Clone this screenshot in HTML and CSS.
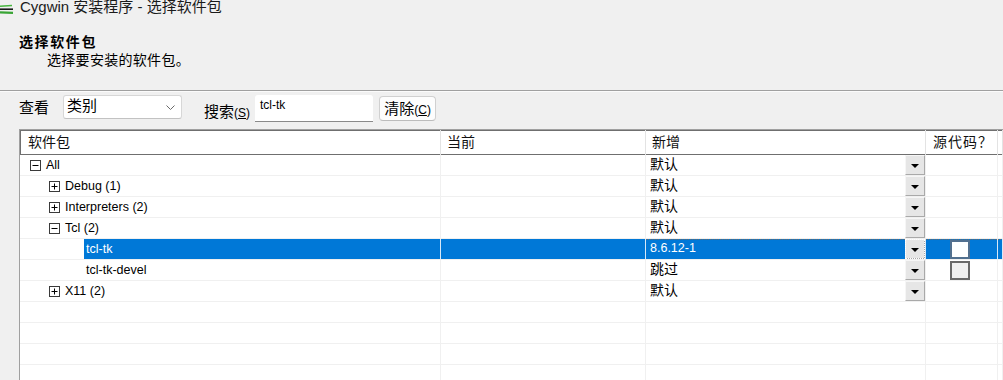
FILE: index.html
```html
<!DOCTYPE html>
<html lang="zh-CN">
<head>
<meta charset="utf-8">
<title>Cygwin 安装程序 - 选择软件包</title>
<link rel="stylesheet" href="styles.css">
</head>
<body>
<div class="titlebar">
  <svg class="logo" width="14" height="12" viewBox="0 0 14 12">
    <path d="M0 2.2 L12 1.5" stroke="#47b53f" stroke-width="1.6" fill="none"/>
    <path d="M0 5.2 L13 5.2" stroke="#1a1a1a" stroke-width="1.6" fill="none"/>
    <path d="M0 8.4 L13 8.8" stroke="#39a535" stroke-width="2.2" fill="none"/>
  </svg>
  <span class="title">Cygwin 安装程序 - 选择软件包</span>
</div>

<div class="pagehead">
  <div class="h1">选择软件包</div>
  <div class="sub">选择要安装的软件包。</div>
</div>
<div class="sep"></div>

<div class="toolbar">
  <span class="lbl">查看</span>
  <div class="combo">
    <span class="combo-text">类别</span>
    <svg class="chev" width="9" height="5" viewBox="0 0 9 5"><path d="M0.5 0.5 L4.5 4.5 L8.5 0.5" stroke="#6a6a6a" fill="none" stroke-width="1"/></svg>
  </div>
  <span class="lbl lbl-search">搜索<small>(<u>S</u>)</small></span>
  <div class="input">tcl-tk</div>
  <div class="btn">清除<small>(<u>C</u>)</small></div>
</div>

<div class="grid">
  <div class="row head">
    <div class="cell c1">软件包</div>
    <div class="cell c2">当前</div>
    <div class="cell c3">新增</div>
    <div class="cell c4">源代码？</div>
    <div class="cell c5"></div>
  </div>

  <div class="row">
    <div class="cell c1 l0"><svg class="exp" width="11" height="11" viewBox="0 0 11 11"><rect x="0.5" y="0.5" width="10" height="10" fill="#fff" stroke="#3a3a3a"/><path d="M2.5 5.5h6" stroke="#000"/></svg><span class="name">All</span></div>
    <div class="cell c2"></div>
    <div class="cell c3"><span class="val">默认</span><span class="dd"><i></i></span></div>
    <div class="cell c4"></div>
    <div class="cell c5"></div>
  </div>

  <div class="row">
    <div class="cell c1 l1"><svg class="exp" width="11" height="11" viewBox="0 0 11 11"><rect x="0.5" y="0.5" width="10" height="10" fill="#fff" stroke="#3a3a3a"/><path d="M2.5 5.5h6M5.5 2.5v6" stroke="#000"/></svg><span class="name">Debug (1)</span></div>
    <div class="cell c2"></div>
    <div class="cell c3"><span class="val">默认</span><span class="dd"><i></i></span></div>
    <div class="cell c4"></div>
    <div class="cell c5"></div>
  </div>

  <div class="row">
    <div class="cell c1 l1"><svg class="exp" width="11" height="11" viewBox="0 0 11 11"><rect x="0.5" y="0.5" width="10" height="10" fill="#fff" stroke="#3a3a3a"/><path d="M2.5 5.5h6M5.5 2.5v6" stroke="#000"/></svg><span class="name">Interpreters (2)</span></div>
    <div class="cell c2"></div>
    <div class="cell c3"><span class="val">默认</span><span class="dd"><i></i></span></div>
    <div class="cell c4"></div>
    <div class="cell c5"></div>
  </div>

  <div class="row">
    <div class="cell c1 l1"><svg class="exp" width="11" height="11" viewBox="0 0 11 11"><rect x="0.5" y="0.5" width="10" height="10" fill="#fff" stroke="#3a3a3a"/><path d="M2.5 5.5h6" stroke="#000"/></svg><span class="name">Tcl (2)</span></div>
    <div class="cell c2"></div>
    <div class="cell c3"><span class="val">默认</span><span class="dd"><i></i></span></div>
    <div class="cell c4"></div>
    <div class="cell c5"></div>
  </div>

  <div class="row sel">
    <div class="cell c1 l2"><span class="name pkg">tcl-tk</span></div>
    <div class="cell c2"></div>
    <div class="cell c3"><span class="val">8.6.12-1</span><span class="dd"><i></i></span></div>
    <div class="cell c4"><span class="cb"></span></div>
    <div class="cell c5"></div>
  </div>

  <div class="row">
    <div class="cell c1 l2"><span class="name pkg">tcl-tk-devel</span></div>
    <div class="cell c2"></div>
    <div class="cell c3"><span class="val">跳过</span><span class="dd"><i></i></span></div>
    <div class="cell c4"><span class="cb"></span></div>
    <div class="cell c5"></div>
  </div>

  <div class="row">
    <div class="cell c1 l1"><svg class="exp" width="11" height="11" viewBox="0 0 11 11"><rect x="0.5" y="0.5" width="10" height="10" fill="#fff" stroke="#3a3a3a"/><path d="M2.5 5.5h6M5.5 2.5v6" stroke="#000"/></svg><span class="name">X11 (2)</span></div>
    <div class="cell c2"></div>
    <div class="cell c3"><span class="val">默认</span><span class="dd"><i></i></span></div>
    <div class="cell c4"></div>
    <div class="cell c5"></div>
  </div>

  <div class="row"><div class="cell c1"></div><div class="cell c2"></div><div class="cell c3"></div><div class="cell c4"></div><div class="cell c5"></div></div>
  <div class="row"><div class="cell c1"></div><div class="cell c2"></div><div class="cell c3"></div><div class="cell c4"></div><div class="cell c5"></div></div>
  <div class="row"><div class="cell c1"></div><div class="cell c2"></div><div class="cell c3"></div><div class="cell c4"></div><div class="cell c5"></div></div>
  <div class="row"><div class="cell c1"></div><div class="cell c2"></div><div class="cell c3"></div><div class="cell c4"></div><div class="cell c5"></div></div>
</div>
</body>
</html>
```

FILE: styles.css
```css
* { box-sizing: border-box; margin: 0; padding: 0; }

html, body { width: 1003px; height: 380px; }

body {
  background: #f0f0f0;
  font-family: "Liberation Sans", "Noto Sans CJK SC", sans-serif;
  color: #000;
  overflow: hidden;
}

/* title bar */
.titlebar {
  height: 20px;
  display: flex;
  align-items: flex-start;
}
.logo { flex: none; margin-top: 4px; }
.title {
  margin-left: 6px;
  margin-top: -2px;
  font-size: 15px;
  line-height: 17px;
  color: #1b1b1b;
  white-space: nowrap;
}

/* page heading */
.pagehead {
  margin-top: 12px;
  padding-left: 19px;
  font-family: "Noto Sans CJK SC", sans-serif;
}
.h1 {
  font-size: 14px;
  font-weight: 700;
  line-height: 18px;
  letter-spacing: 1.6px;
}
.sub {
  padding-left: 28px;
  font-size: 14px;
  line-height: 18px;
  letter-spacing: 0.3px;
}
.sep {
  margin-top: 22px;
  height: 2px;
  border-top: 1px solid #a0a0a0;
  border-bottom: 1px solid #fbfbfb;
}

/* toolbar */
.toolbar {
  margin-top: 2px;
  height: 28px;
  padding-left: 19px;
  display: flex;
  align-items: flex-start;
  font-family: "Noto Sans CJK SC", sans-serif;
}
.lbl {
  font-size: 15px;
  line-height: 26px;
  width: 44px;
  white-space: nowrap;
}
.lbl small, .btn small {
  font-family: "Liberation Sans", sans-serif;
  font-size: 12px;
}
.combo {
  margin-top: 1px;
  width: 119px;
  height: 24px;
  background: #fff;
  border: 1px solid #d7d7d7;
  border-bottom-color: #c2c2c2;
  border-radius: 3px;
  display: flex;
  align-items: center;
  justify-content: space-between;
  padding: 0 6px 0 3px;
}
.combo-text {
  font-size: 15px;
  line-height: 20px;
  margin-top: -4px;
}
.chev { flex: none; margin-top: 1px; }
.lbl-search {
  margin-left: 22px;
  width: auto;
  padding-top: 4px;
}
.input {
  margin-left: 5px;
  margin-top: 1px;
  width: 118px;
  height: 27px;
  background: #fff;
  border-bottom: 1px solid #8a8a8a;
  border-radius: 3px 3px 0 0;
  font-family: "Liberation Sans", sans-serif;
  font-size: 12px;
  line-height: 14px;
  padding: 3px 5px;
}
.btn {
  margin-left: 6px;
  margin-top: 2px;
  width: 57px;
  height: 25px;
  background: #fdfdfd;
  border: 1px solid #d0d0d0;
  border-bottom-color: #bcbcbc;
  border-radius: 4px;
  font-size: 15px;
  line-height: 22px;
  text-align: center;
  white-space: nowrap;
}

/* grid */
.grid {
  margin-top: 7px;
  margin-left: 19px;
  height: 260px;
  background: #fff;
  border-top: 1px solid #a0a0a0;
  border-left: 1px solid #a0a0a0;
}
.row {
  display: grid;
  grid-template-columns: 421px 205px 280px 72px 1fr;
  grid-template-rows: 21px;
  height: 21px;
}
.cell {
  border-right: 1px solid #f0f0f0;
  border-bottom: 1px solid #f0f0f0;
  display: flex;
  align-items: center;
  white-space: nowrap;
  min-height: 0;
}
.row.head {
  height: 25px;
  grid-template-rows: 25px;
  box-shadow: inset 1px 1px 0 #6f6f6f, inset 0 -1px 0 #6f6f6f;
}
.head .cell {
  border-right-color: #e3e3e3;
  border-bottom: none;
  font-family: "Noto Sans CJK SC", sans-serif;
  font-size: 14px;
  line-height: 20px;
  padding-bottom: 3px;
  color: #111;
}
.head .c1 { padding-left: 8px; }
.head .c2 { padding-left: 6px; }
.head .c3 { padding-left: 6px; }
.head .c4 { padding-left: 7px; letter-spacing: 1px; }

.name {
  font-size: 12.5px;
  line-height: 20px;
  color: #000;
}
.exp { flex: none; margin-right: 5px; }
.l0 { padding-left: 10px; }
.l1 { padding-left: 29px; }
.l2 { padding-left: 64px; }
.pkg { padding-left: 2px; }

.c3 { padding-left: 4px; justify-content: space-between; }
.val {
  font-family: "Noto Sans CJK SC", sans-serif;
  font-size: 14px;
  line-height: 20px;
  margin-top: -4px;
}
.dd {
  flex: none;
  width: 20px;
  height: 20px;
  background: #e6e6e6;
  border-top: 1px solid #f6f6f6;
  border-left: 1px solid #f6f6f6;
  border-right: 1px solid #a9a9a9;
  border-bottom: 1px solid #a9a9a9;
  display: flex;
  align-items: center;
  justify-content: center;
}
.dd i {
  display: block;
  margin-top: 2px;
  width: 0;
  height: 0;
  border-left: 4px solid transparent;
  border-right: 4px solid transparent;
  border-top: 4px solid #000;
}

.cb {
  margin-left: 24px;
  margin-top: 1px;
  width: 20px;
  height: 19px;
  border: 2px solid #686868;
  background: #efefef;
}

/* selected row */
.sel .c1 { background: #fff; }
.sel .pkg {
  flex: 1;
  align-self: stretch;
  background: #0078d7;
  color: #fff;
}
.sel .c2 { background: #0078d7; }
.sel .c3, .sel .c4, .sel .c5 {
  background:
    repeating-linear-gradient(90deg, #6a6a6a 0 1px, transparent 1px 2px) top left / 100% 1px no-repeat,
    #0078d7;
}
.sel .val { color: #fff; font-family: "Liberation Sans", sans-serif; font-size: 12.5px; margin-top: -2px; }
.sel .cb { background: #fff; border-color: #52708f; }
.sel .cell { border-right-color: #d7e8f7; }
.sel .dd { outline: 1px dotted #ffffff; outline-offset: -1px; }
```
